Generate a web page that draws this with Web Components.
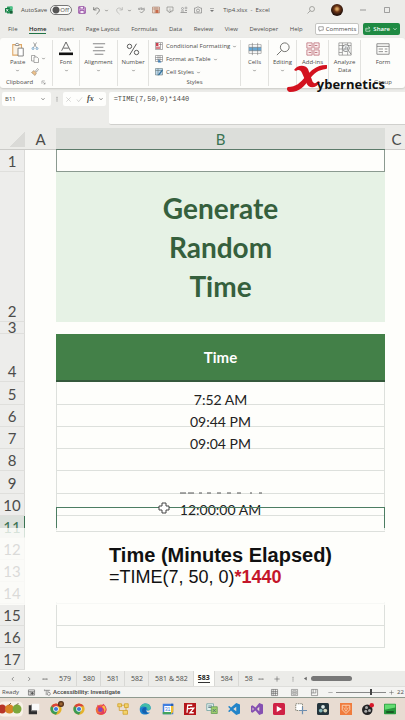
<!DOCTYPE html>
<html lang="en">
<head>
<meta charset="utf-8">
<meta name="viewport" content="width=device-width, initial-scale=1">
<title>Tip4.xlsx - Excel</title>
<style>
  body {
    margin: 0;
    min-height: 100vh;
    display: flex;
    flex-direction: column;
    overflow: hidden;
    background: #ecece9;
    color: #4c4c4a;
    font-family: "Open Sans", "Noto Sans", sans-serif;
    font-size: 6px;
    line-height: 8px;
  }
  main {
    position: relative;
    flex: 1;
    overflow: hidden;
    background: #fefefb;
  }
</style>
</head>
<body>
  <title-bar file="Tip4.xlsx"></title-bar>
  <ribbon-tabs active="Home"></ribbon-tabs>
  <ribbon-panel>
    <ribbon-group label="Clipboard" launcher>
      <clipboard-tools></clipboard-tools>
    </ribbon-group>
    <ribbon-group><big-button icon="font" label="Font" menu></big-button></ribbon-group>
    <ribbon-group><big-button icon="align" label="Alignment" menu></big-button></ribbon-group>
    <ribbon-group><big-button icon="percent" label="Number" menu></big-button></ribbon-group>
    <ribbon-group label="Styles">
      <style-tools></style-tools>
    </ribbon-group>
    <ribbon-group><big-button icon="cells" label="Cells" menu></big-button></ribbon-group>
    <ribbon-group><big-button icon="search" label="Editing" menu></big-button></ribbon-group>
    <ribbon-group><big-button icon="addins" label="Add-ins"></big-button></ribbon-group>
    <ribbon-group><big-button icon="analyze" label="Analyze Data"></big-button></ribbon-group>
    <ribbon-group label="Group"><big-button icon="form" label="Form"></big-button></ribbon-group>
    <brand-logo slot="over">ybernetics</brand-logo>
  </ribbon-panel>
  <formula-bar cell="B11" formula="=TIME(7,50,0)*1440"></formula-bar>
  <main>
    <sheet-grid></sheet-grid>
    <caption-card>
      <span slot="title">Time (Minutes Elapsed)</span>
      =TIME(7, 50, 0)<strong>*1440</strong>
    </caption-card>
  </main>
  <sheet-tabs active="583"></sheet-tabs>
  <status-bar></status-bar>
  <task-bar></task-bar>

<script>
const ICONS = {
  excel: `<rect x="4" y="1" width="11" height="14" rx="1" fill="#2f9d62"/><path d="M10 1h5v5h-5z" fill="#4cc48a"/><path d="M10 10h5v5h-5z" fill="#185c37"/><rect x="0" y="4" width="9" height="9" rx="1" fill="#107c41"/><path d="M2.500 6l4 5M6.500 6l-4 5" stroke="#fff" stroke-width="1.500"/>`,
  save: `<path d="M1.500 1.500h11l2 2v11h-13z" fill="#d9b9df" stroke="#8a3d9a" stroke-width="1.800"/><path d="M4 2v4h7V2M4 14v-5h8v5" fill="#f6ecf7" stroke="#8a3d9a" stroke-width="1.400"/>`,
  undo: `<path d="M3 2v5h5M3.500 6.500C6 2.500 13 2.500 13 7.500c0 3-3 5-5 7" fill="none" stroke="#686866" stroke-width="1.400"/>`,
  redo: `<path d="M13 2v5H8M12.500 6.500C10 2.500 3 2.500 3 7.500c0 3 3 5 5 7" fill="none" stroke="#b4b4b1" stroke-width="1.400"/>`,
  spell: `<path d="M1 7V4.500h3V7H1M6 2v5h3V4.500H6M14 4.500h-3V7h3" fill="none" stroke="#777"/><path d="M4 11l3 3 6-6" fill="none" stroke="#777" stroke-width="1.400"/>`,
  macro: `<path d="M1 2h14v12H1z" fill="#f0d8c8" stroke="#9b6a55"/><path d="M1 6h14M6 2v12M10 2v12" stroke="#9b6a55"/><path d="M7 8h6v6H7z" fill="#c76a4a"/>`,
  touch: `<path d="M2 2h12v8h-4l-3 4-2-4H2z" fill="none" stroke="#7c7c7a" stroke-width="1.200"/><path d="M8 5v6l3 1" stroke="#7c7c7a" fill="none"/>`,
  people: `<circle cx="5" cy="5" r="2" fill="none" stroke="#777"/><circle cx="12" cy="4" r="2" fill="none" stroke="#777"/><path d="M1 13h13M2 10h6M10 9h4" stroke="#777" stroke-width="1.300"/>`,
  camera: `<path d="M1 4h3l2-2h4l2 2h3v10H1z" fill="none" stroke="#777" stroke-width="1.200"/><circle cx="8" cy="9" r="3" fill="none" stroke="#777" stroke-width="1.200"/>`,
  search: `<circle cx="10" cy="6" r="5" fill="none" stroke="#62625f"/><path d="M6.500 9.500L1 15" stroke="#62625f"/>`,
  more: `<path d="M4 5h8" stroke="#777"/><path d="M4 8h8l-4 4z" fill="#777"/>`,
  minimize: `<path d="M2 8h12" stroke="#777" stroke-width="1.400"/>`,
  maximize: `<path d="M3 3h10v10H3z" fill="none" stroke="#777" stroke-width="1.300"/>`,
  chevron: `<path d="M4 6l4 4 4-4" fill="none" stroke="currentColor" stroke-width="1.800"/>`,
  comment: `<path d="M2 2h12v9H8l-3 3v-3H2z" fill="none" stroke="#555" stroke-width="1.400"/>`,
  share: `<path d="M5 6H2v8h11v-4M5 10c0-4 3-5 7-5M9 2l4 3-4 3" fill="none" stroke="#fff" stroke-width="1.500"/>`,
  paste: `<path d="M2 3h10v12H2z" fill="#fbf3e6" stroke="#dfa867" stroke-width="1.200"/><path d="M5 3c0-2 4-2 4 0v1H5z" fill="#fff" stroke="#888"/><path d="M8 7h6v9H8z" fill="#fff" stroke="#777"/>`,
  cut: `<path d="M5 1l6 10M11 1L5 11" stroke="#6b6b69" stroke-width="1.200"/><circle cx="4" cy="13" r="2" fill="none" stroke="#4a86b8" stroke-width="1.300"/><circle cx="12" cy="13" r="2" fill="none" stroke="#4a86b8" stroke-width="1.300"/>`,
  copy: `<path d="M6 12H1V1h7v3M6 4h6l3 3v8H6z" fill="none" stroke="#777" stroke-width="1.200"/>`,
  brush: `<path d="M9 6l4-5 2 2-4 5z" fill="#fff" stroke="#777" stroke-width="1.200"/><path d="M6 5l5 5-3 5-7-6z" fill="#edc08a" stroke="#8b7a64"/>`,
  font: `<path d="M3 10L8 0l5 10M5 7h6" fill="none" stroke="#555" stroke-width="1"/><path d="M0 12h16v3H0z" fill="#111"/>`,
  align: `<path d="M1 2h14M3 6h10M1 10h14M3 14h10" stroke="#777" stroke-width="1"/>`,
  percent: `<circle cx="4" cy="5" r="2.500" fill="none" stroke="#555" stroke-width="1.100"/><circle cx="12" cy="12" r="2.500" fill="none" stroke="#555" stroke-width="1.100"/><path d="M12 2L4 15" stroke="#555" stroke-width="1.100"/>`,
  conditional: `<path d="M1 1h14v14H1z" fill="#fff" stroke="#666"/><path d="M2 2h5v6H2z" fill="#cc4250"/><path d="M2 9h8v5H2z" fill="#d9828a"/><path d="M8 5h6M11 2v12" stroke="#666"/>`,
  tablefmt: `<path d="M1 1h14v12H1z" fill="#fff" stroke="#666"/><path d="M1 5h14M1 9h14M6 1v12M10 1v12" stroke="#666"/><path d="M7 8l6 7H6z" fill="#3f7fb5"/>`,
  cellstyle: `<path d="M1 1h14v13H1z" fill="#bcd8ec" stroke="#566"/><path d="M1 5h14M6 1v13" stroke="#566"/><path d="M14 3l-7 9-2 3 4-1 7-9z" fill="#36739e"/>`,
  cells: `<path d="M1 3h14v10H1z" fill="#fff" stroke="#888" stroke-width=".7"/><path d="M1 6h14v4H1z" fill="#67a7d3"/><path d="M5 1v14M11 1v14M1 6h14M1 10h14" stroke="#777" stroke-width=".7"/>`,
  addins: `<path d="M1 1h6v6H1zM9 1h6v6H9zM1 9h6v6H1zM9 9h6v6H9z" fill="#fbeeee" stroke="#bc6d77" stroke-width=".9"/><path d="M3 4h3M10 4h3M3 12h3M10 12h3" stroke="#bc6d77"/>`,
  analyze: `<path d="M1 1h14v14H1zM1 4h14M1 8h4M1 12h4M5 1v14M11 1v3M11 11v4" fill="none" stroke="#777" stroke-width=".7"/><circle cx="9" cy="7" r="4" fill="#eef1f2" stroke="#666" stroke-width=".8"/><path d="M7 9V7M9 9V5M11 9V6M12 10l3 4" stroke="#666" stroke-width=".8"/>`,
  form: `<path d="M1 2h14v12H1zM1 5h14M3 8h5M3 11h5M10 8h3M10 11h3" fill="none" stroke="#777" stroke-width=".9"/>`,
  launcher: `<path d="M3 12V3h9M7 7l6 6M13 8v5H8" fill="none" stroke="#666" stroke-width="1.500"/>`,
  cancel: `<path d="M3 3l10 10M13 3L3 13" stroke="#b4b4b2" stroke-width="1.200"/>`,
  accept: `<path d="M2 8l4 5 8-10" fill="none" stroke="#b4b4b2" stroke-width="1.200"/>`,
  left: `<path d="M10 3L5 8l5 5" fill="none" stroke="#555" stroke-width="1.600"/>`,
  right: `<path d="M6 3l5 5-5 5" fill="none" stroke="#555" stroke-width="1.600"/>`,
  dots: `<circle cx="3" cy="8" r="1.500"/><circle cx="8" cy="8" r="1.500"/><circle cx="13" cy="8" r="1.500"/>`,
  vdots: `<circle cx="8" cy="3" r="1.200"/><circle cx="8" cy="8" r="1.200"/><circle cx="8" cy="13" r="1.200"/>`,
  plus: `<path d="M8 1v14M1 8h14" stroke="#555" stroke-width="1.500"/>`,
  minus: `<path d="M1 8h14" stroke="#666" stroke-width="1.500"/>`,
  scrollleft: `<path d="M12 2v12L3 8z" fill="#666"/>`,
  record: `<path d="M1 2h14v12H1zM1 6h14M5 6v8" fill="none" stroke="#555" stroke-width="1.400"/><circle cx="10" cy="10" r="3" fill="#555"/>`,
  access: `<path d="M2 3h12M5 3v11M9 3v4M1 1v4" stroke="#666" stroke-width="1.400" fill="none"/><circle cx="11" cy="11" r="3.500" fill="none" stroke="#666" stroke-width="1.400"/>`,
  normal: `<path d="M1 1h14v14H1zM1 6h14M1 10h14M5 1v14M10 1v14" fill="none" stroke="#555" stroke-width="1.300"/>`,
  layout: `<path d="M1 1h14v14H1zM4 4h8v8H4zM5 7h6M5 9h6" fill="none" stroke="#666" stroke-width="1.200"/>`,
  pagebreak: `<path d="M1 1h14v14H1zM5 1v8h6V1M1 9h4" fill="none" stroke="#666" stroke-width="1.300"/>`,
  taskview: `<path d="M5 1h10v9H5z" fill="#fafafa"/><path d="M1 3h4v7h7v5H1z" fill="#2d2d2f"/><path d="M4 2h1v8h7v1H4z" fill="#888"/>`,
  chrome: `<circle cx="8" cy="8" r="7.500" fill="#e5b22c"/><path d="M8 8L1.500 4.300A7.500 7.500 0 0 1 14.500 4.300L8 4.500z" fill="#d9443a"/><path d="M1.500 4.300A7.500 7.500 0 0 0 8 15.500l3-6z" fill="#3a9a55"/><circle cx="8" cy="8" r="3.700" fill="#fff"/><circle cx="8" cy="8" r="2.800" fill="#3f79d8"/>`,
  firefox: `<circle cx="8" cy="9" r="7" fill="#f0703a"/><path d="M3 2c1 2 3 1 5 3l3-4c4 3 6 8 3 12-3 3-9 3-12 0 5 2 9-1 8-4-2-2-4 0-6-1z" fill="#e33b60"/><path d="M12 3c3 4 3 7 0 10 1-4 0-6-3-8z" fill="#fbc13d"/><circle cx="7" cy="9" r="3" fill="#8546b6"/>`,
  flow: `<path d="M1 1h5v4H1zM10 1h5v5h-5zM8 10h6v5H8z" fill="#f3d36b" stroke="#cf9d26"/><path d="M6 3h4M12 6v4M3 5v5h5" fill="none" stroke="#cf9d26"/>`,
  edge: `<path d="M1 9C1 3 5 .5 9 .5c5 0 7 4 6.500 7-.5 2-3 3-6 2.500 1 3 4 3 5 2.500-3 4-13 5-13.500-3.500z" fill="#1d83d0"/><path d="M1 7C2 2 6 .5 9 .5c5 0 7 4 6.500 7-.500 1.500-2 2-4 2 0-4-6-7-10.500-2.500z" fill="#43bda8"/><path d="M4 10c0-3 3-5 6-4-2 2-1 6 2 8-4 1-8 0-8-4z" fill="#155fae"/>`,
  calendar: `<path d="M1 1h14v14H1z" fill="#3f7ee0"/><path d="M12 1h3v3h-3z" fill="#2c5eb5"/><path d="M1 12h11v3H1z" fill="#42a45c"/><path d="M12 4h3v8l-3 3z" fill="#f1bc2f"/><path d="M3 4h9v8H3z" fill="#fff"/><text x="7.500" y="10.500" font-size="7" text-anchor="middle" fill="#3f7ee0" font-family="Liberation Sans, sans-serif">31</text>`,
  filezilla: `<path d="M0 0h16v16H0z" fill="#b5161c"/><path d="M4 13l1-10h6M4.500 7.500h4M8 7h5l-5 6h5" fill="none" stroke="#fff" stroke-width="1.700"/>`,
  notepad: `<path d="M1 1h9v9H1z" fill="#e3f0ed" stroke="#689e9f"/><path d="M7 5h8v9H7z" fill="#9fcd6c" stroke="#5f9a52"/><path d="M3 4h5M3 6h4M9 8l4 4M13 8l-4 4" stroke="#467"/>`,
  vscode: `<path d="M11 0l5 2v12l-5 2-7-6-2 2-2-1 3-3-3-3 2-1 2 2zM11 5L7 8l4 3z" fill="#2284c9" fill-rule="evenodd"/>`,
  visualstudio: `<path d="M11 0l5 2v12l-5 2-5-6-4 3-2-1V4l2-1 4 3zM11 5L8 8l3 3zM2 6v4l2-2z" fill="#8550b2" fill-rule="evenodd"/>`,
  player: `<rect width="16" height="16" rx="2" fill="#cf2145"/><path d="M5 4l7 4-7 4z" fill="#fff"/>`,
  snip: `<path d="M1 1h9v9H1z" fill="#fff" stroke="#665" stroke-dasharray="2 1"/><path d="M10 5v10M6 10h10" stroke="#6d8eb0" stroke-width="1.600"/>`,
  resolve: `<rect width="16" height="16" rx="2" fill="#24343c"/><circle cx="8" cy="5" r="2.500" fill="#dce9e8"/><circle cx="5" cy="10" r="2.500" fill="#83b8bc"/><circle cx="11" cy="10" r="2.500" fill="#d6d8bf"/>`,
  brave: `<path d="M0 0h16v16H0z" fill="#f07c3d"/><path d="M3 3h10v6l-5 5-5-5z" fill="none" stroke="#fbd0af" stroke-width="1.300"/><path d="M5 6l3 5 3-5M8 3v5" fill="none" stroke="#fbd0af"/>`,
  obs: `<circle cx="7" cy="9" r="7" fill="#242426"/><circle cx="6" cy="6" r="2" fill="#aaa"/><circle cx="5" cy="11" r="2" fill="#aaa"/><circle cx="10" cy="10" r="2" fill="#aaa"/><circle cx="13" cy="3" r="3" fill="#d8182a"/>`,
  monitor: `<rect y="1" width="16" height="14" rx="1" fill="#27973c"/><path d="M1 2h14v4L1 9z" fill="#63dc71"/><path d="M3 11h10v2H3z" fill="#16461e"/>`,
  fruit: `<rect x="-4" y="-2" width="32" height="20" rx="6" fill="#f7f0e7"/><circle cx="0" cy="8" r="6" fill="#b83527"/><circle cx="10" cy="8" r="6" fill="#d88324"/><circle cx="20" cy="8" r="6" fill="#7da83b"/><path d="M9 3l3-3M19 3l3-3" stroke="#564024"/>`,
};

class UiIcon extends HTMLElement {
  connectedCallback() {
    const name = this.getAttribute("name");
    const box = name === "fruit" ? "0 0 24 16" : "0 0 16 16";
    this.attachShadow({ mode: "open" }).innerHTML = `
      <style>
        :host { display: inline-block; flex: none; width: var(--size, 8px); height: var(--size, 8px); }
        svg { display: block; width: 100%; height: 100%; overflow: visible; }
      </style>
      <svg viewBox="${box}" aria-hidden="true">${ICONS[name]}</svg>
    `;
  }
}

// shared reset for the buttons inside each shadow root
const BUTTON = `
  button {
    display: flex;
    align-items: center;
    margin: 0;
    padding: 0;
    border: 0;
    background: none;
    color: inherit;
    font: inherit;
    white-space: nowrap;
  }
`;

class TitleBar extends HTMLElement {
  connectedCallback() {
    const quick = ["spell", "macro", "touch", "people", "camera", "more"];
    this.attachShadow({ mode: "open" }).innerHTML = `
      <style>
        ${BUTTON}
        :host { display: flex; align-items: center; height: 20px; padding: 0 14px 0 5px; }
        label { display: flex; align-items: center; gap: 3px; margin-left: 8px; }
        input {
          appearance: none; box-sizing: border-box; margin: 0;
          width: 22px; height: 10px; border: 1px solid #777; border-radius: 5px;
          background: radial-gradient(circle at 5px 4px, #555 3px, transparent 4px) #fbfbf9;
        }
        .toggle { display: grid; align-items: center; }
        .toggle > * { grid-area: 1 / 1; }
        .toggle span { padding-left: 10px; }
        .quick { display: flex; align-items: center; gap: 6px; margin-left: 6px; }
        .pair { display: flex; gap: 3px; --size: 9px; }
        .pair ui-icon + ui-icon { --size: 5px; align-self: center; }
        .file { margin-left: 7px; }
        .end { display: flex; align-items: center; margin-left: auto; gap: 16px; }
        .avatar {
          width: 12px; height: 12px; border-radius: 50%;
          background: radial-gradient(circle at 6px 5px, #d6a15e 1px, #6d3516 3px, #25120c 6px);
        }
      </style>
      <ui-icon name="excel"></ui-icon>
      <label>AutoSave
        <span class="toggle"><input type="checkbox" role="switch"><span>Off</span></span>
      </label>
      <div class="quick">
        <button aria-label="Save"><ui-icon name="save"></ui-icon></button>
        <button class="pair" aria-label="Undo"><ui-icon name="undo"></ui-icon><ui-icon name="chevron"></ui-icon></button>
        <button class="pair" aria-label="Redo"><ui-icon name="redo"></ui-icon><ui-icon name="chevron"></ui-icon></button>
        ${quick.map(n => `<button aria-label="${n}"><ui-icon name="${n}"></ui-icon></button>`).join("")}
      </div>
      <span class="file">${this.getAttribute("file")} &nbsp;-&nbsp; Excel</span>
      <div class="end">
        <button aria-label="Search"><ui-icon name="search"></ui-icon></button>
        <span class="avatar"></span>
        <button aria-label="Minimize"><ui-icon name="minimize"></ui-icon></button>
        <button aria-label="Maximize"><ui-icon name="maximize"></ui-icon></button>
      </div>
    `;
  }
}

class RibbonTabs extends HTMLElement {
  connectedCallback() {
    const active = this.getAttribute("active");
    const tabs = ["File", "Home", "Insert", "Page Layout", "Formulas", "Data", "Review", "View", "Developer", "Help"];
    this.attachShadow({ mode: "open" }).innerHTML = `
      <style>
        ${BUTTON}
        :host { display: flex; align-items: center; height: 18px; padding: 0 5px 0 8px; }
        nav { display: flex; flex: 1; justify-content: space-between; margin-right: 12px; }
        a { color: inherit; text-decoration: none; white-space: nowrap; border-bottom: 1px solid transparent; }
        .active { color: #222; font-weight: 600; border-color: #217346; }
        button { gap: 2px; height: 12px; box-sizing: border-box; padding: 0 2px; border-radius: 2px; --size: 6px; }
        .comments { border: 1px solid #c5c5c2; background: #fff; margin-right: 4px; }
        .share { background: #1f8a43; color: #fff; font-weight: 600; }
      </style>
      <nav>${tabs.map(t => `<a href="#" class="${t === active ? "active" : ""}">${t}</a>`).join("")}</nav>
      <button class="comments"><ui-icon name="comment"></ui-icon>Comments</button>
      <button class="share"><ui-icon name="share"></ui-icon>Share<ui-icon name="chevron"></ui-icon></button>
    `;
  }
}

class RibbonPanel extends HTMLElement {
  connectedCallback() {
    this.attachShadow({ mode: "open" }).innerHTML = `
      <style>
        :host {
          position: relative;
          display: grid;
          grid-template-columns: 53fr 27fr 38fr 31fr 92fr 28fr 28fr 32fr 32fr 44fr;
          height: 50px;
          background: #fdfdfb;
          border-radius: 3px;
          box-shadow: 0 1px 2px #c9c9c5;
        }
        slot[name=over]::slotted(*) { position: absolute; right: 20px; top: 27px; }
      </style>
      <slot></slot>
      <slot name="over"></slot>
    `;
  }
}

class RibbonGroup extends HTMLElement {
  connectedCallback() {
    const label = this.getAttribute("label") || "";
    this.attachShadow({ mode: "open" }).innerHTML = `
      <style>
        ${BUTTON}
        :host { display: flex; flex-direction: column; min-width: 0; margin: 2px 0; border-right: 1px solid #e2e2df; }
        :host(:last-of-type) { border: 0; }
        .body { flex: 1; }
        footer { display: flex; justify-content: center; align-items: center; gap: 8px; height: 8px; --size: 5px; }
      </style>
      <div class="body"><slot></slot></div>
      ${label && `<footer>${label}${this.hasAttribute("launcher") ? `<button aria-label="${label} options"><ui-icon name="launcher"></ui-icon></button>` : ""}</footer>`}
    `;
  }
}

class BigButton extends HTMLElement {
  connectedCallback() {
    this.attachShadow({ mode: "open" }).innerHTML = `
      <style>
        ${BUTTON}
        :host { display: block; }
        button { flex-direction: column; width: 100%; gap: 2px; --size: 14px; padding-top: 2px; line-height: 8px; }
        span { width: min-content; white-space: normal; }
        .menu { --size: 5px; }
      </style>
      <button>
        <ui-icon name="${this.getAttribute("icon")}"></ui-icon>
        <span>${this.getAttribute("label").replace("-", "\u2011")}</span>
        ${this.hasAttribute("menu") ? `<ui-icon class="menu" name="chevron"></ui-icon>` : ""}
      </button>
    `;
  }
}

class ClipboardTools extends HTMLElement {
  connectedCallback() {
    this.attachShadow({ mode: "open" }).innerHTML = `
      <style>
        ${BUTTON}
        :host { display: flex; gap: 4px; padding-left: 10px; }
        .small { display: flex; flex-direction: column; justify-content: space-around; height: 38px; padding-left: 2px; }
        .small button { gap: 2px; }
        .drop { --size: 5px; }
      </style>
      <big-button icon="paste" label="Paste" menu></big-button>
      <div class="small">
        <button aria-label="Cut"><ui-icon name="cut"></ui-icon></button>
        <button aria-label="Copy"><ui-icon name="copy"></ui-icon><ui-icon class="drop" name="chevron"></ui-icon></button>
        <button aria-label="Format Painter"><ui-icon name="brush"></ui-icon></button>
      </div>
    `;
  }
}

class StyleTools extends HTMLElement {
  connectedCallback() {
    const items = [["conditional", "Conditional Formatting"], ["tablefmt", "Format as Table"], ["cellstyle", "Cell Styles"]];
    this.attachShadow({ mode: "open" }).innerHTML = `
      <style>
        ${BUTTON}
        :host { display: grid; gap: 5px; padding: 2px 0 0 6px; }
        button { gap: 3px; }
        .drop { --size: 5px; margin-left: -1px; }
      </style>
      ${items.map(([icon, text]) => `<button><ui-icon name="${icon}"></ui-icon>${text}<ui-icon class="drop" name="chevron"></ui-icon></button>`).join("")}
    `;
  }
}

class BrandLogo extends HTMLElement {
  connectedCallback() {
    this.attachShadow({ mode: "open" }).innerHTML = `
      <style>
        :host { display: flex; align-items: flex-end; font: bold 13px/16px "Open Sans", "Noto Sans", sans-serif; color: #111; }
        svg { width: 40px; height: 27px; margin-right: -10px; }
      </style>
      <svg viewBox="0 0 40 27" aria-hidden="true">
        <path d="M7 5C10 0 18-1 21 4l4 11c1 4 4 4 6 1l2 1c-4 7-12 7-14 0L15 8c-1-3-4-4-6-2z" fill="#d3121f"/>
        <path d="M39 0C29 0 24 6 19 11 13 18 9 22 1 22c-2 1-1 5 2 5 10 0 14-6 19-12C27 8 31 5 39 4c2-1 2-4 0-4z" fill="#d3121f"/>
      </svg>
      <slot></slot>
    `;
  }
}

class FormulaBar extends HTMLElement {
  connectedCallback() {
    this.attachShadow({ mode: "open" }).innerHTML = `
      <style>
        ${BUTTON}
        :host { display: flex; align-items: flex-start; gap: 3px; height: 33px; padding: 4px 0 3px 2px; }
        .box { display: flex; align-items: center; height: 14px; background: #fefefc; border-radius: 2px; }
        .more { background: none; --size: 6px; }
        input, textarea {
          box-sizing: border-box; margin: 0; border: 0; outline: 0; resize: none;
          color: inherit; background: none; font: inherit;
        }
        input { width: 38px; padding: 0 3px; }
        .name { width: 49px; }
        .tools { gap: 4px; padding: 0 2px; --size: 7px; }
        .drop { --size: 6px; }
        em { font: italic bold 8px/10px "Liberation Serif", serif; }
        textarea {
          flex: 1; height: 33px; padding: 3px 5px; background: #fefefc;
          border-bottom: 1px solid #d0d0cd;
          border-radius: 2px 0 0 2px; font: 7px/8px "Liberation Mono", monospace;
        }
      </style>
      <div class="box name">
        <input aria-label="Name Box" value="${this.getAttribute("cell")}">
        <button aria-label="Named ranges"><ui-icon class="drop" name="chevron"></ui-icon></button>
      </div>
      <div class="box more"><ui-icon name="vdots"></ui-icon></div>
      <div class="box tools">
        <button aria-label="Cancel"><ui-icon name="cancel"></ui-icon></button>
        <button aria-label="Enter"><ui-icon name="accept"></ui-icon></button>
        <button aria-label="Insert Function"><em>fx</em></button>
        <ui-icon class="drop" name="chevron"></ui-icon>
      </div>
      <textarea aria-label="Formula" spellcheck="false">${this.getAttribute("formula")}</textarea>
    `;
  }
}

class SheetGrid extends HTMLElement {
  connectedCallback() {
    const heights = { 2: 150, 3: 12, 4: 48, 5: 23, 9: 23 };
    const cells = {
      2: `<h1>Generate<br>Random<br>Time</h1>`,
      4: "Time",
      5: "7:52 AM",
      6: "09:44 PM",
      7: "09:04 PM",
      9: `<svg class="trace" viewBox="0 0 84 3" aria-hidden="true"><path d="M1 1h6m2 0h6m5 0h3m5 0h4m6 0h4m6 0h4m6 0h4m9 0h2m7 0h3m4 0h3" stroke="#555"/></svg>`,
      10: "12:00:00 AM",
      11: `<span class="selection"></span>`,
    };
    let rows = "";
    for (let r = 1; r <= 17; r++) {
      const h = heights[r] || 22;
      rows += `
        <tr class="r${r}">
          <th scope="row"><div style="height:${h - 1}px">${r}</div></th>
          <td></td>
          <td class="b">${cells[r] || ""}</td>
          <td></td>
        </tr>`;
    }
    this.attachShadow({ mode: "open" }).innerHTML = `
      <style>
        :host { display: block; position: relative; font: 15px/20px Lato, "Open Sans", sans-serif; }
        table { width: 100%; table-layout: fixed; border-collapse: separate; border-spacing: 0; }
        .c0 { width: 25px; }
        .c1 { width: 31px; }
        .c3 { width: 20px; }
        th, td { box-sizing: border-box; padding: 0; }
        th { font-weight: 400; }
        thead th { height: 22px; background: #ecece9; border-bottom: 1px solid #cbcbc8; }
        thead .b { background: #dcdeda; color: #3a7352; border-bottom-color: #5d7b6a; }
        thead th:last-child { padding-left: 3px; }
        .corner { display: block; width: 15px; height: 16px; margin-left: auto; background: linear-gradient(135deg, transparent 50%, #dadad7 50%); }
        tbody th { background: #ededeb; border-bottom: 1px solid #dfdfdc; border-right: 1px solid #dbdbd8; }
        th div { display: flex; align-items: flex-end; justify-content: center; overflow: hidden; }
        td.b {
          position: relative; vertical-align: bottom; text-align: center; color: #222; font-size: 14px; line-height: 8px;
          border: solid #dde0dc; border-width: 0 1px 1px;
        }
        .r1 td.b { border-color: #8b9a90; }
        .r2 td.b { background: #e6f2e5; border: 0; vertical-align: middle; }
        .r3 th { line-height: 11px; }
        .r3 td.b, .r17 td.b { border: 0; }
        .r4 td.b {
          background: #438048; border: 0; border-bottom: 2px solid #35593c;
          color: #fff; font-size: 15px; font-weight: 700; vertical-align: middle;
        }
        .r10 td.b { padding-bottom: 1px; }
        .r11 th { background: #dce1dc; border-right-color: #3a7352; color: #3a7352; }
        h1 { margin: 0; color: #35603d; font-size: 28px; line-height: 39px; }
        .trace { display: block; width: 84px; height: 3px; margin: 0 auto -2px; }
        .selection {
          position: absolute; left: -1px; right: -1px; top: -9px; height: 22px;
          border: solid #4c7d62; border-width: 1px 1px 0;
        }
        .cursor { position: absolute; left: 158px; top: 374px; width: 12px; height: 12px; }
      </style>
      <table>
        <colgroup><col class="c0"><col class="c1"><col><col class="c3"></colgroup>
        <thead>
          <tr><th><span class="corner"></span></th><th scope="col">A</th><th scope="col" class="b">B</th><th scope="col">C</th></tr>
        </thead>
        <tbody>${rows}</tbody>
      </table>
      <svg class="cursor" viewBox="0 0 12 12" aria-hidden="true">
        <path d="M4 1h4v3h3v4H8v3H4V8H1V4h3z" fill="#fff" stroke="#444"/>
      </svg>
    `;
  }
}

class CaptionCard extends HTMLElement {
  connectedCallback() {
    this.attachShadow({ mode: "open" }).innerHTML = `
      <style>
        :host {
          position: absolute; left: 0; right: 0; top: 400px; box-sizing: border-box; height: 77px;
          background: rgba(254, 254, 251, .8);
          color: #111;
          font: 18px/22px "Liberation Sans", Arial, sans-serif;
        }
        .card {
          box-sizing: border-box; height: 71px; margin: 3px 20px 3px 56px; padding: 12px 0 0 53px;
          background: #fefefb; border-top: 1px solid #dde0dc;
        }
        .title { font-size: 20px; font-weight: 700; white-space: nowrap; }
        ::slotted(strong) { color: #c4162a; }
      </style>
      <div class="card">
        <div class="title"><slot name="title"></slot></div>
        <slot></slot>
      </div>
    `;
  }
}

class SheetTabs extends HTMLElement {
  connectedCallback() {
    const active = this.getAttribute("active");
    const tabs = ["579", "580", "581", "582", "581 & 582", "583", "584", "58"];
    this.attachShadow({ mode: "open" }).innerHTML = `
      <style>
        ${BUTTON}
        :host { display: flex; align-items: center; height: 15px; padding-left: 10px; font-size: 7px; --size: 6px; }
        .nav { display: flex; gap: 10px; margin-right: 5px; }
        .tabs { display: flex; }
        .tabs button { height: 15px; padding: 0 5px 0 6px; box-sizing: border-box; border-right: 1px solid #d8d8d5; }
        .tabs button:last-child { border: 0; }
        .tabs .active { padding: 0 4px; background: #fefefb; font-weight: 700; color: #222; }
        .active span { border-bottom: 1px solid #333; }
        .tools { display: flex; align-items: center; gap: 10px; }
        .scroll { display: flex; align-items: center; flex: 1; gap: 3px; margin-left: 7px; }
        .scroll ui-icon { --size: 5px; }
        .thumb { width: 41px; height: 5px; border-radius: 3px; background: #777; }
      </style>
      <div class="nav">
        <button aria-label="Previous sheet"><ui-icon name="left"></ui-icon></button>
        <button aria-label="Next sheet"><ui-icon name="right"></ui-icon></button>
        <button aria-label="More sheets"><ui-icon name="dots"></ui-icon></button>
      </div>
      <div class="tabs">
        ${tabs.map(t => `<button class="${t === active ? "active" : ""}"><span>${t.replace("&", "&amp;")}</span></button>`).join("")}
      </div>
      <div class="tools">
        <button aria-label="Sheet list"><ui-icon name="dots"></ui-icon></button>
        <button aria-label="New sheet"><ui-icon name="plus"></ui-icon></button>
        <ui-icon name="vdots"></ui-icon>
      </div>
      <div class="scroll"><ui-icon name="scrollleft"></ui-icon><span class="thumb"></span></div>
    `;
  }
}

class StatusBar extends HTMLElement {
  connectedCallback() {
    this.attachShadow({ mode: "open" }).innerHTML = `
      <style>
        ${BUTTON}
        :host {
          display: flex; align-items: center; box-sizing: border-box; height: 12px; padding-left: 2px;
          overflow: hidden; background: #f4f4f2; border-top: 1px solid #dededb; border-bottom: 1px solid #8f9a8f; --size: 7px;
        }
        .ready { margin-right: 9px; }
        .access { gap: 2px; margin-left: 9px; font-family: Roboto, sans-serif; font-weight: 600; }
        .views { display: flex; gap: 13px; margin-left: auto; margin-right: 10px; }
        .zoom { display: flex; align-items: center; gap: 3px; --size: 5px; }
        input { appearance: none; width: 50px; height: 7px; margin: 0; background: linear-gradient(#888, #888) center / 100% 1px no-repeat; }
        input::-webkit-slider-thumb { appearance: none; width: 2px; height: 6px; background: #444; }
        .pct { width: 8px; white-space: nowrap; }
      </style>
      <span class="ready">Ready</span>
      <ui-icon name="record"></ui-icon>
      <button class="access"><ui-icon name="access"></ui-icon>Accessibility: Investigate</button>
      <div class="views">
        <button aria-label="Normal"><ui-icon name="normal"></ui-icon></button>
        <button aria-label="Page Layout"><ui-icon name="layout"></ui-icon></button>
        <button aria-label="Page Break Preview"><ui-icon name="pagebreak"></ui-icon></button>
      </div>
      <div class="zoom">
        <ui-icon name="minus"></ui-icon>
        <input type="range" min="0" max="100" value="70" aria-label="Zoom">
        <ui-icon name="plus"></ui-icon>
        <span class="pct">22</span>
      </div>
    `;
  }
}

class TaskBar extends HTMLElement {
  connectedCallback() {
    const apps = ["taskview", "chrome", "chrome", "firefox", "flow", "edge", "calendar", "filezilla", "notepad", "vscode",
      "visualstudio", "player", "snip", "resolve", "brave", "obs", "monitor"];
    this.attachShadow({ mode: "open" }).innerHTML = `
      <style>
        ${BUTTON}
        :host {
          display: flex; align-items: center; justify-content: space-between;
          height: 22px; padding-right: 9px; background: #e8dcd2; --size: 12px;
        }
        .wide { width: 22px; }
        .wide + button { margin-left: -4px; }
        .profile { position: relative; }
        .profile::after {
          content: ""; position: absolute; right: -2px; top: -2px; width: 6px; height: 6px;
          border-radius: 50%; background: radial-gradient(#b8793e, #40200f 3px);
        }
      </style>
      <ui-icon class="wide" name="fruit"></ui-icon>
      ${apps.map((n, i) => `<button aria-label="${n}" class="${i === 1 ? "profile" : ""}"><ui-icon name="${n}"></ui-icon></button>`).join("")}
    `;
  }
}

customElements.define("ui-icon", UiIcon);
customElements.define("title-bar", TitleBar);
customElements.define("ribbon-tabs", RibbonTabs);
customElements.define("ribbon-panel", RibbonPanel);
customElements.define("ribbon-group", RibbonGroup);
customElements.define("big-button", BigButton);
customElements.define("clipboard-tools", ClipboardTools);
customElements.define("style-tools", StyleTools);
customElements.define("brand-logo", BrandLogo);
customElements.define("formula-bar", FormulaBar);
customElements.define("sheet-grid", SheetGrid);
customElements.define("caption-card", CaptionCard);
customElements.define("sheet-tabs", SheetTabs);
customElements.define("status-bar", StatusBar);
customElements.define("task-bar", TaskBar);
</script>
</body>
</html>
